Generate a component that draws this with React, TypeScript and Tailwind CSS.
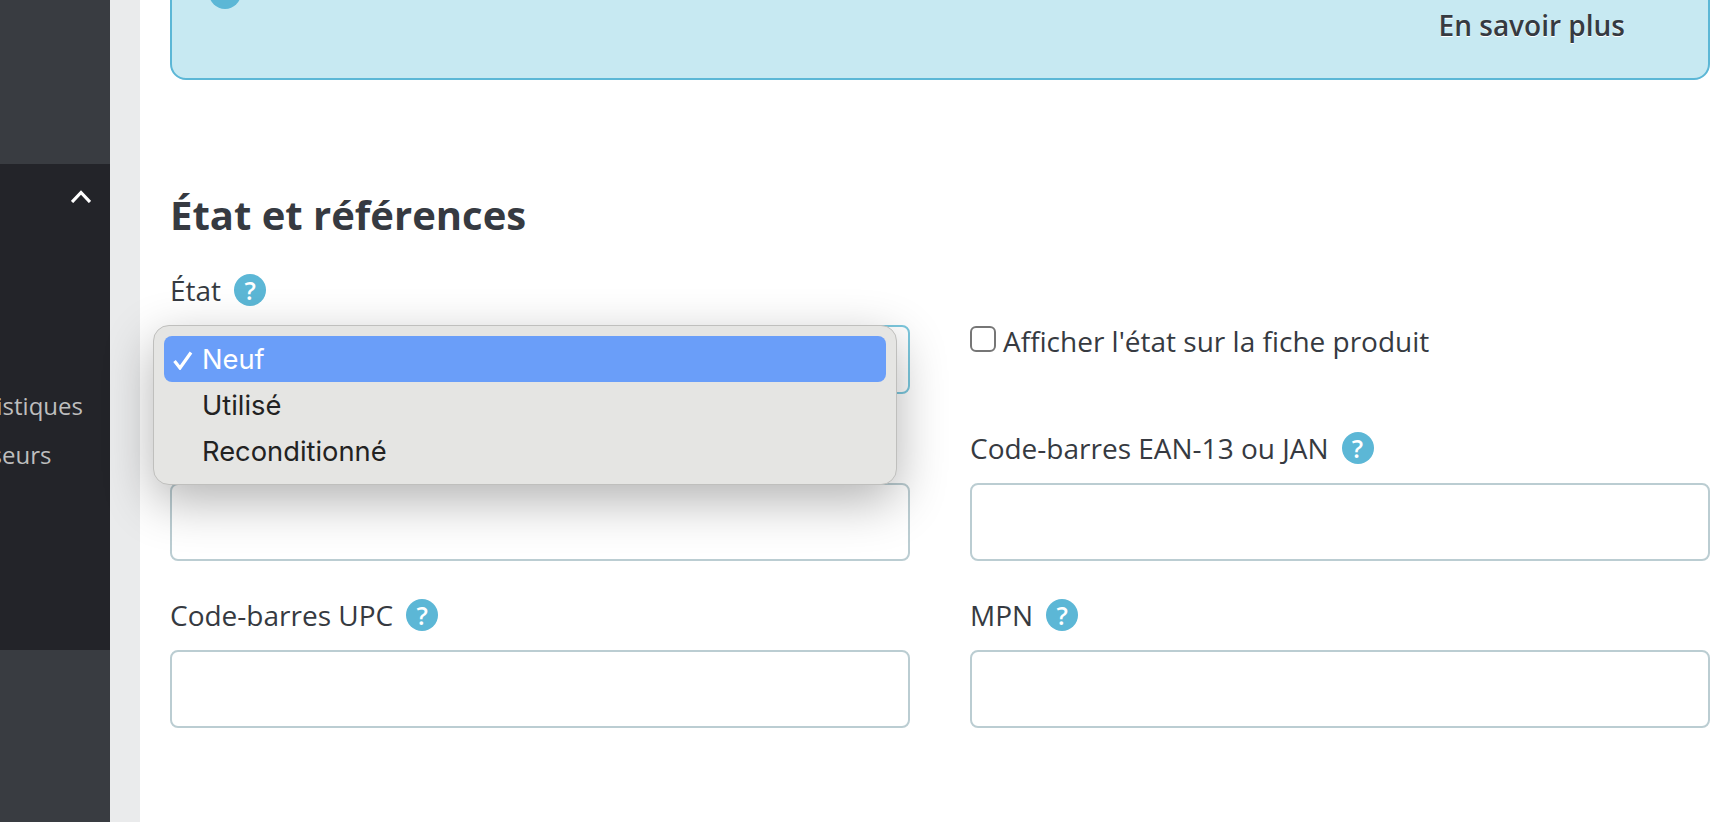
const sans = "font-['Open_Sans',sans-serif]";

function Help() {
  return (
    <span className="ml-[13px] flex h-[32px] w-[32px] shrink-0 items-center justify-center rounded-full bg-[#5cb7d6] text-[25px] font-semibold leading-none text-white">
      ?
    </span>
  );
}

function Field({ label }: { label: string }) {
  return (
    <div>
      <div className="flex h-[32px] items-center text-[28px] leading-none text-[#363a41]">
        {label}
        <Help />
      </div>
      <input className="mt-[19px] block h-[78px] w-full rounded-[8px] border-2 border-[#bbcdd2] bg-white" />
    </div>
  );
}

export default function App() {
  return (
    <div className={`flex h-screen w-full overflow-hidden bg-white ${sans}`}>
      <aside className="flex w-[110px] shrink-0 flex-col overflow-hidden bg-[#393c41]">
        <div className="h-[164px] shrink-0" />
        <div className="h-[486px] shrink-0 bg-[#232429]">
          <div className="flex justify-end pr-[19px] pt-[26px]">
            <svg width="20" height="13" viewBox="0 0 20 13" fill="none" stroke="white" strokeWidth="3.2">
              <polyline points="1,12 10,2.5 19,12" />
            </svg>
          </div>
          <div className="mt-[178px] flex justify-end whitespace-nowrap pr-[27px] text-[24px] leading-[49px] text-[#bebebe]">
            <ul>
              <li>Attributs &amp; caractéristiques</li>
              <li>Marques et fournisseurs</li>
            </ul>
          </div>
        </div>
      </aside>
      <div className="w-[30px] shrink-0 bg-[#eaebec]" />
      <main className="min-w-0 flex-1 pl-[30px]">
        <div className="relative -mt-[20px] flex h-[100px] w-full items-start justify-end rounded-[16px] border-2 border-[#5cb7d6] bg-[#c7e9f2] pr-[83px] pt-[24px]">
          <span className="absolute left-[37px] top-[5px] h-[32px] w-[32px] -translate-y-[10px] rounded-full bg-[#5cb7d6]" />
          <span className="text-[28px] font-semibold leading-[38px] text-[#363a41] [text-shadow:0_1px_0_#fff]">
            En savoir plus
          </span>
        </div>

        <h2 className="mt-[110px] text-[40px] font-bold leading-[50px] text-[#363a41]">État et références</h2>

        <div className="mt-[34px] flex h-[32px] items-center text-[28px] leading-none text-[#363a41]">
          État
          <Help />
        </div>

        <div className="mt-[19px] grid grid-cols-[740px_740px] gap-x-[60px]">
          <div className="relative h-[69px] rounded-[8px] border-2 border-[#7cc8de] bg-white">
            <div className="absolute -left-[19px] -top-[2px] z-10 w-[744px] rounded-[16px] border border-[#bfbfbd] bg-[#e5e5e3] px-[10px] py-[10px] font-['Inter',sans-serif] text-[27.3px] leading-[46px] text-[#222222] shadow-[0_16px_50px_rgba(0,0,0,0.3)]">
              <div className="flex h-[46px] items-center rounded-[8px] bg-[#6a9ef9] pl-[9px] pt-[2px] text-white">
                <svg width="20" height="19" viewBox="0 0 20 19" fill="none" stroke="white" strokeWidth="3.2" className="mr-[9px]">
                  <polyline points="1.5,10 7,17 18,1.5" />
                </svg>
                Neuf
              </div>
              <div className="h-[46px] pl-[38px] leading-[48px]">Utilisé</div>
              <div className="h-[46px] pl-[38px] leading-[48px]">Reconditionné</div>
            </div>
          </div>
          <label className="flex h-[28px] items-start text-[28px] leading-[32px] text-[#363a41]">
            <span className="mr-[7px] mt-[1px] h-[26px] w-[26px] shrink-0 rounded-[6px] border-2 border-[#767676] bg-white" />
            Afficher l'état sur la fiche produit
          </label>
        </div>

        <div className="mt-[38px] grid grid-cols-[740px_740px] gap-x-[60px] gap-y-[38px]">
          <div>
            <div className="h-[32px]" />
            <input className="mt-[19px] block h-[78px] w-full rounded-[8px] border-2 border-[#bbcdd2] bg-white" />
          </div>
          <Field label="Code-barres EAN-13 ou JAN" />
          <Field label="Code-barres UPC" />
          <Field label="MPN" />
        </div>
      </main>
    </div>
  );
}
